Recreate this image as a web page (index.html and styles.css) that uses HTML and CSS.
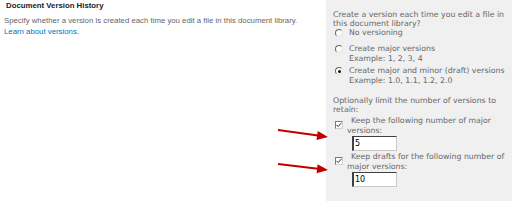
FILE: index.html
```html
<!DOCTYPE html>
<html lang="en">
<head>
  <meta charset="UTF-8" />
  <title>Document Version History</title>
  <link rel="stylesheet" href="styles.css">
</head>
<body>
  <div class="page">
    <section class="intro">
      <h3 class="intro-title">Document Version History</h3>
      <p class="intro-desc">Specify whether a version is created each time you edit a file in this document library.<br><a href="#">Learn about versions.</a></p>
    </section>

    <section class="settings">
      <p class="question">Create a version each time you edit a file in<br>this document library?</p>

      <div class="radio-row first"><span class="radio"></span>No versioning</div>
      <div class="radio-row gap-lg"><span class="radio"></span>Create major versions</div>
      <div class="example">Example: 1, 2, 3, 4</div>
      <div class="radio-row gap-sm"><span class="radio checked"></span>Create major and minor (draft) versions</div>
      <div class="example">Example: 1.0, 1.1, 1.2, 2.0</div>

      <p class="question limit-q">Optionally limit the number of versions to<br>retain:</p>

      <div class="limit-row">
        <span class="check">
          <svg width="6" height="6" viewBox="0 0 6 6"><polyline points="0.5,2.8 2.2,4.6 5.5,0.8" fill="none" stroke="#333" stroke-width="1"/></svg>
        </span>
        <div class="limit-body">
          <div class="limit-label">Keep the following number of major<br>versions:</div>
          <input class="num-box" type="text" value="5">
        </div>
      </div>

      <div class="limit-row second">
        <span class="check">
          <svg width="6" height="6" viewBox="0 0 6 6"><polyline points="0.5,2.8 2.2,4.6 5.5,0.8" fill="none" stroke="#333" stroke-width="1"/></svg>
        </span>
        <div class="limit-body">
          <div class="limit-label">Keep drafts for the following number of<br>major versions:</div>
          <input class="num-box" type="text" value="10">
        </div>
      </div>
    </section>

    <!-- annotation arrows drawn over the page -->
    <svg class="arrows" width="512" height="201" viewBox="0 0 512 201">
      <line x1="278" y1="130" x2="318" y2="135.5" stroke="#c00000" stroke-width="2"/>
      <polygon points="328,137 317.7,131 316.5,140" fill="#c00000"/>
      <line x1="278" y1="164" x2="318" y2="168.8" stroke="#c00000" stroke-width="2"/>
      <polygon points="328,170 317.6,164.2 316.6,173.2" fill="#c00000"/>
    </svg>
  </div>
</body>
</html>
```

FILE: styles.css
```css
/* Reset & base */
html, body {
  margin: 0; padding: 0;
  width: 100%; height: 100%;
  background: #fff;
  overflow: hidden;
}
.page {
  position: relative;
  display: flex;
  width: 512px; height: 201px;
}
/* Left column: title + description */
.intro {
  width: 322px;
  padding-left: 4px;
  font-family: "Liberation Sans", Arial, sans-serif;
  font-size: 7.8px;
}
.intro-title {
  margin: 1px 0 0 2px;
  font-size: 7.8px;
  line-height: 10px;
  font-weight: bold;
  color: #222;
}
.intro-desc {
  margin: 4px 0 0;
  line-height: 11px;
  color: #666;
}
.intro-desc a {
  color: #0072bc;
  text-decoration: none;
}
/* Right column: grey settings panel */
.settings {
  flex: 1;
  background: #f0f0f0;
  padding: 10px 0 0 7px;
  overflow: hidden;
  white-space: nowrap;
  font-family: "DejaVu Sans", Verdana, sans-serif;
  font-size: 7.8px;
  color: #676767;
}
.question {
  margin: 0;
  line-height: 9px;
}
.limit-q { margin-top: 10px; }
/* Radios */
.radio-row {
  display: flex; align-items: center;
  padding-left: 2px;
  line-height: 10px;
}
.radio-row.gap-lg { margin-top: 6px; }
.radio-row.gap-sm { margin-top: 2px; }
.radio {
  position: relative;
  width: 8px; height: 8px;
  box-sizing: border-box;
  margin-right: 6px;
  border-radius: 50%;
  border: 1px solid;
  border-color: #6a6a6a #e4e4e4 #e4e4e4 #6a6a6a;
  background: #fbfbfb;
}
.radio.checked::after {
  content: "";
  position: absolute; top: 1.5px; left: 1.5px;
  width: 3px; height: 3px;
  border-radius: 50%;
  background: #111;
}
.example {
  padding-left: 16px;
  line-height: 10px;
}
/* Version limits */
.limit-row {
  display: flex;
  margin-top: 2px;
  padding-left: 2px;
}
.limit-row.second { margin-top: 1px; }
.check {
  display: flex; align-items: center; justify-content: center;
  width: 8px; height: 8px;
  box-sizing: border-box;
  margin-top: 5px; margin-right: 4px;
  border: 1px solid;
  border-color: #7a7a7a #d0d0d0 #d0d0d0 #7a7a7a;
  background: #fff;
}
.limit-label {
  line-height: 9.5px;
  text-indent: 4px;
}
.num-box {
  display: block;
  width: 45px; height: 15px;
  box-sizing: border-box;
  margin: 1px 0 0 5px;
  padding: 0 0 0 1px;
  border: 1px solid #c8c8c8;
  border-top-color: #404040;
  border-left: 2px solid #404040;
  background: #fff;
  font-family: "DejaVu Sans", Verdana, sans-serif;
  font-size: 8px;
  color: #000;
  outline: none;
}
/* Annotation overlay */
.arrows {
  position: absolute; top: 0; left: 0;
  pointer-events: none;
}
```
